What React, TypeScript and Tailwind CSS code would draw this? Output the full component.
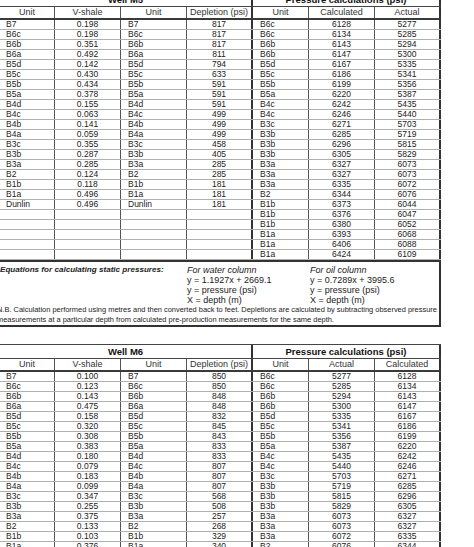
import React from "react"

type RowData = [string, string, string, string, string, string, string]

const m5Left: [string, string, string, string][] = [
  ["B7", "0.198", "B7", "817"],
  ["B6c", "0.198", "B6c", "817"],
  ["B6b", "0.351", "B6b", "817"],
  ["B6a", "0.492", "B6a", "811"],
  ["B5d", "0.142", "B5d", "794"],
  ["B5c", "0.430", "B5c", "633"],
  ["B5b", "0.434", "B5b", "591"],
  ["B5a", "0.378", "B5a", "591"],
  ["B4d", "0.155", "B4d", "591"],
  ["B4c", "0.063", "B4c", "499"],
  ["B4b", "0.141", "B4b", "499"],
  ["B4a", "0.059", "B4a", "499"],
  ["B3c", "0.355", "B3c", "458"],
  ["B3b", "0.287", "B3b", "405"],
  ["B3a", "0.285", "B3a", "285"],
  ["B2", "0.124", "B2", "285"],
  ["B1b", "0.118", "B1b", "181"],
  ["B1a", "0.496", "B1a", "181"],
  ["Dunlin", "0.496", "Dunlin", "181"],
]

const m5Right: [string, string, string][] = [
  ["B6c", "6128", "5277"],
  ["B6c", "6134", "5285"],
  ["B6b", "6143", "5294"],
  ["B6b", "6147", "5300"],
  ["B5d", "6167", "5335"],
  ["B5c", "6186", "5341"],
  ["B5b", "6199", "5356"],
  ["B5a", "6220", "5387"],
  ["B4c", "6242", "5435"],
  ["B4c", "6246", "5440"],
  ["B3c", "6271", "5703"],
  ["B3b", "6285", "5719"],
  ["B3b", "6296", "5815"],
  ["B3b", "6305", "5829"],
  ["B3a", "6327", "6073"],
  ["B3a", "6327", "6073"],
  ["B3a", "6335", "6072"],
  ["B2", "6344", "6076"],
  ["B1b", "6373", "6044"],
  ["B1b", "6376", "6047"],
  ["B1b", "6380", "6052"],
  ["B1a", "6393", "6068"],
  ["B1a", "6406", "6088"],
  ["B1a", "6424", "6109"],
]

const m6Left: [string, string, string, string][] = [
  ["B7", "0.100", "B7", "850"],
  ["B6c", "0.123", "B6c", "850"],
  ["B6b", "0.143", "B6b", "848"],
  ["B6a", "0.475", "B6a", "848"],
  ["B5d", "0.158", "B5d", "832"],
  ["B5c", "0.320", "B5c", "845"],
  ["B5b", "0.308", "B5b", "843"],
  ["B5a", "0.383", "B5a", "833"],
  ["B4d", "0.180", "B4d", "833"],
  ["B4c", "0.079", "B4c", "807"],
  ["B4b", "0.183", "B4b", "807"],
  ["B4a", "0.099", "B4a", "807"],
  ["B3c", "0.347", "B3c", "568"],
  ["B3b", "0.255", "B3b", "508"],
  ["B3a", "0.375", "B3a", "257"],
  ["B2", "0.133", "B2", "268"],
  ["B1b", "0.103", "B1b", "329"],
  ["B1a", "0.376", "B1a", "340"],
  ["Dunlin", "0.376", "Dunlin", "340"],
]

const m6Right: [string, string, string][] = [
  ["B6c", "5277", "6128"],
  ["B6c", "5285", "6134"],
  ["B6b", "5294", "6143"],
  ["B6b", "5300", "6147"],
  ["B5d", "5335", "6167"],
  ["B5c", "5341", "6186"],
  ["B5b", "5356", "6199"],
  ["B5a", "5387", "6220"],
  ["B4c", "5435", "6242"],
  ["B4c", "5440", "6246"],
  ["B3c", "5703", "6271"],
  ["B3b", "5719", "6285"],
  ["B3b", "5815", "6296"],
  ["B3b", "5829", "6305"],
  ["B3a", "6073", "6327"],
  ["B3a", "6073", "6327"],
  ["B3a", "6072", "6335"],
  ["B2", "6076", "6344"],
  ["B1b", "6044", "6373"],
  ["B1b", "6047", "6376"],
]

// merge the two halves into 7-cell rows (left side padded with blanks)
function mergeRows(left: string[][], right: string[][]): RowData[] {
  const n = Math.max(left.length, right.length)
  const rows: RowData[] = []
  for (let i = 0; i < n; i++) {
    const l = left[i] ?? ["", "", "", ""]
    const r = right[i] ?? ["", "", ""]
    rows.push([l[0], l[1], l[2], l[3], r[0], r[1], r[2]])
  }
  return rows
}

function DataRow({ row }: { row: RowData }) {
  return (
    <div className="flex h-[10px] border-b border-[#b0b0b0] text-[8.5px] leading-[9px]">
      <div className="w-[55px] shrink-0 border-r border-[#555] pl-[6px]">{row[0]}</div>
      <div className="w-[66px] shrink-0 border-r border-[#555] text-center">{row[1]}</div>
      <div className="w-[66px] shrink-0 border-r border-[#555] pl-[7px]">{row[2]}</div>
      <div className="w-[66px] shrink-0 border-r-2 border-[#333] text-center">{row[3]}</div>
      <div className="w-[56px] shrink-0 border-r border-[#555] pl-[7px]">{row[4]}</div>
      <div className="w-[66px] shrink-0 border-r border-[#555] text-center">{row[5]}</div>
      <div className="w-[66px] shrink-0 border-r-2 border-[#333] text-center">{row[6]}</div>
    </div>
  )
}

function HeaderRow({ labels }: { labels: string[] }) {
  return (
    <div className="flex h-[13px] border-b-2 border-[#3a3a3a] text-[9px] leading-[11px] text-[#333]">
      <div className="w-[55px] shrink-0 border-r border-[#555] text-center">{labels[0]}</div>
      <div className="w-[66px] shrink-0 border-r border-[#555] text-center">{labels[1]}</div>
      <div className="w-[66px] shrink-0 border-r border-[#555] text-center">{labels[2]}</div>
      <div className="w-[66px] shrink-0 border-r-2 border-[#333] text-center">{labels[3]}</div>
      <div className="w-[56px] shrink-0 border-r border-[#555] text-center">{labels[4]}</div>
      <div className="w-[66px] shrink-0 border-r border-[#555] text-center">{labels[5]}</div>
      <div className="w-[66px] shrink-0 border-r-2 border-[#333] text-center">{labels[6]}</div>
    </div>
  )
}

function TitleRow({ well }: { well: string }) {
  return (
    <div className="flex h-[14px] border-b border-[#444] text-[9.5px] font-bold leading-[13px] text-[#111]">
      <div className="w-[253px] shrink-0 border-r-2 border-[#333] text-center">{well}</div>
      <div className="w-[188px] shrink-0 border-r-2 border-[#333] text-center">
        Pressure calculations (psi)
      </div>
    </div>
  )
}

export default function App() {
  const top = mergeRows(m5Left, m5Right)
  const bottom = mergeRows(m6Left, m6Right)

  return (
    <div className="h-[547px] w-[474px] overflow-hidden bg-white font-['Liberation_Sans',Arial,sans-serif] text-[#222]">
      {/* Well M5 block, scrolled so the title row is half cut */}
      <div className="-mt-[7px] w-[441px]">
        <TitleRow well="Well M5" />
        <HeaderRow labels={["Unit", "V-shale", "Unit", "Depletion (psi)", "Unit", "Calculated", "Actual"]} />
        {top.map((row, i) => (
          <DataRow key={i} row={row} />
        ))}
        <div className="border-t-2 border-[#333] border-r-2 border-b-2">
          <div className="flex pt-[3px] text-[9px] leading-[10px]">
            <div className="w-[187px] shrink-0 text-[8.1px] font-bold italic">
              Equations for calculating static pressures:
            </div>
            <div className="w-[123px] shrink-0">
              <div className="italic">For water column</div>
              <div>y = 1.1927x + 2669.1</div>
              <div>y = pressure (psi)</div>
              <div>X = depth (m)</div>
            </div>
            <div>
              <div className="italic">For oil column</div>
              <div>y = 0.7289x + 3995.6</div>
              <div>y = pressure (psi)</div>
              <div>X = depth (m)</div>
            </div>
          </div>
          <div className="-ml-[3px] whitespace-nowrap text-[7.45px] leading-[10px]">
            N.B. Calculation performed using metres and then converted back to feet. Depletions are calculated by subtracting observed pressure
            <br />
            measurements at a particular depth from calculated pre-production measurements for the same depth.
          </div>
        </div>
      </div>

      {/* Well M6 block */}
      <div className="mt-[17px] w-[441px] border-t border-[#444]">
        <TitleRow well="Well M6" />
        <HeaderRow labels={["Unit", "V-shale", "Unit", "Depletion (psi)", "Unit", "Actual", "Calculated"]} />
        {bottom.map((row, i) => (
          <DataRow key={i} row={row} />
        ))}
      </div>
    </div>
  )
}
